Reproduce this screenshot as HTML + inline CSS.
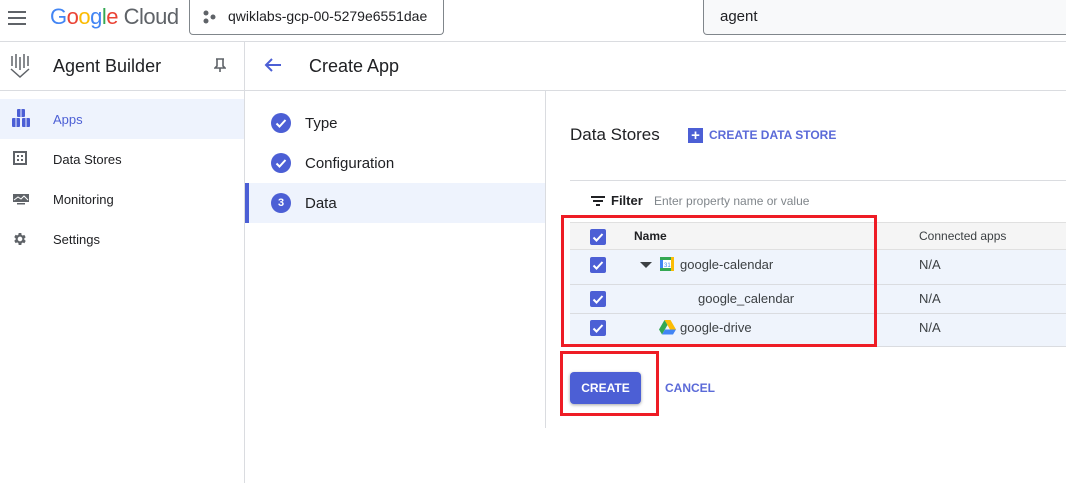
<!DOCTYPE html><html><head><style>
*{box-sizing:border-box;margin:0;padding:0}
body{width:1066px;height:483px;overflow:hidden;background:#fff;font-family:"Liberation Sans",Arial,sans-serif;color:#202124;position:relative}
.a{position:absolute}
.t{white-space:nowrap}
</style></head><body>
<div class="a" style="left:8px;top:11px;width:18px;height:2px;background:#5f6368;box-shadow:0 6px 0 #5f6368,0 12px 0 #5f6368"></div>
<div class="a t" style="left:50px;top:4px;font-size:22px;letter-spacing:-0.5px"><span style="color:#4285f4">G</span><span style="color:#ea4335">o</span><span style="color:#fbbc05">o</span><span style="color:#4285f4">g</span><span style="color:#34a853">l</span><span style="color:#ea4335">e</span> <span style="color:#5f6368">Cloud</span></div>
<div class="a" style="left:189px;top:0;width:255px;height:35px;border:1px solid #80868b;border-top:none;border-radius:0 0 4px 4px"></div>
<svg class="a" style="left:203px;top:10px" width="14" height="14"><circle cx="3" cy="3" r="2.5" fill="#5f6368"/><circle cx="3" cy="11" r="2.5" fill="#5f6368"/><circle cx="10" cy="7" r="2.5" fill="#5f6368"/></svg>
<div class="a t" style="left:228px;top:8px;font-size:14px">qwiklabs-gcp-00-5279e6551dae</div>
<div class="a" style="left:703px;top:0;width:370px;height:35px;border:1px solid #80868b;border-top:none;border-radius:0 0 4px 4px;background:#f8f9fa"></div>
<div class="a t" style="left:720px;top:8px;font-size:15px">agent</div>
<div class="a" style="left:0;top:41px;width:1066px;height:1px;background:#dadce0"></div>
<svg class="a" style="left:9px;top:53px" width="24" height="26"><g stroke="#5f6368" stroke-width="1.5"><line x1="3" y1="3" x2="3" y2="13"/><line x1="7" y1="1" x2="7" y2="15"/><line x1="11" y1="4" x2="11" y2="17"/><line x1="15" y1="1" x2="15" y2="15"/><line x1="19" y1="3" x2="19" y2="13"/></g><path d="M2 16 L11 24 L20 16" stroke="#5f6368" fill="none" stroke-width="1.5"/></svg>
<div class="a t" style="left:53px;top:56px;font-size:18px">Agent Builder</div>
<svg class="a" style="left:214px;top:58px" width="12" height="15"><path d="M2 1h8M3 1v7l-2 2h10l-2-2V1M6 10v4" stroke="#5f6368" fill="none" stroke-width="1.6"/></svg>
<div class="a" style="left:0;top:90px;width:1066px;height:1px;background:#dadce0"></div>
<div class="a" style="left:244px;top:42px;width:1px;height:441px;background:#dadce0"></div>
<div class="a" style="left:0;top:99px;width:244px;height:40px;background:#eef3fd"></div>
<svg class="a" style="left:11px;top:109px" width="20" height="19"><g fill="#4c5fd5"><rect x="6" y="0" width="8" height="8" rx="1"/><rect x="1" y="9" width="8" height="9" rx="1"/><rect x="11" y="9" width="8" height="9" rx="1"/></g><g stroke="#eef3fd" stroke-width="1"><line x1="10" y1="0" x2="10" y2="8"/><line x1="5" y1="9" x2="5" y2="18"/><line x1="15" y1="9" x2="15" y2="18"/></g></svg>
<div class="a t" style="left:53px;top:112px;font-size:13px;color:#4c5fd5">Apps</div>
<svg class="a" style="left:13px;top:151px" width="14" height="14"><rect x="1" y="1" width="12" height="12" fill="none" stroke="#5f6368" stroke-width="2"/><g fill="#5f6368"><rect x="4" y="4" width="2" height="2"/><rect x="8" y="4" width="2" height="2"/><rect x="4" y="8" width="2" height="2"/><rect x="8" y="8" width="2" height="2"/></g></svg>
<div class="a t" style="left:53px;top:152px;font-size:13px">Data Stores</div>
<svg class="a" style="left:12px;top:193px" width="18" height="12"><rect x="1" y="1" width="16" height="8" fill="#5f6368"/><path d="M2 7l4-3 3 2 3-3 4 4" stroke="#fff" fill="none"/><rect x="5" y="10" width="8" height="1.5" fill="#5f6368"/></svg>
<div class="a t" style="left:53px;top:192px;font-size:13px">Monitoring</div>
<svg class="a" style="left:12px;top:231px" width="16" height="16" viewBox="0 0 24 24"><path fill="#5f6368" d="M19.4 13a7.5 7.5 0 0 0 0-2l2.1-1.6-2-3.5-2.5 1a7 7 0 0 0-1.7-1L15 3h-4l-.4 2.7a7 7 0 0 0-1.7 1l-2.5-1-2 3.5L6.5 11a7.5 7.5 0 0 0 0 2l-2.1 1.6 2 3.5 2.5-1a7 7 0 0 0 1.7 1L11 21h4l.4-2.7a7 7 0 0 0 1.7-1l2.5 1 2-3.5zM13 15.5A3.5 3.5 0 1 1 13 8.5a3.5 3.5 0 0 1 0 7z" transform="translate(-1 0)"/></svg>
<div class="a t" style="left:53px;top:232px;font-size:13px">Settings</div>
<svg class="a" style="left:263px;top:57px" width="20" height="16"><path d="M18 8H3M9 2L3 8l6 6" stroke="#4c5fd5" stroke-width="2" fill="none"/></svg>
<div class="a t" style="left:309px;top:56px;font-size:18px">Create App</div>
<div class="a" style="left:545px;top:91px;width:1px;height:337px;background:#dadce0"></div>
<svg class="a" style="left:271px;top:113px" width="20" height="20"><circle cx="10" cy="10" r="10" fill="#4c5fd5"/><path d="M5.5 10.5l3 3 6-6.5" stroke="#fff" stroke-width="2" fill="none"/></svg>
<div class="a t" style="left:305px;top:115px;font-size:15px">Type</div>
<svg class="a" style="left:271px;top:153px" width="20" height="20"><circle cx="10" cy="10" r="10" fill="#4c5fd5"/><path d="M5.5 10.5l3 3 6-6.5" stroke="#fff" stroke-width="2" fill="none"/></svg>
<div class="a t" style="left:305px;top:155px;font-size:15px">Configuration</div>
<div class="a" style="left:245px;top:183px;width:300px;height:40px;background:#eef3fd"></div>
<div class="a" style="left:245px;top:183px;width:4px;height:40px;background:#4c5fd5"></div>
<div class="a" style="left:271px;top:193px;width:20px;height:20px;border-radius:50%;background:#4c5fd5;color:#fff;font-size:11px;font-weight:bold;text-align:center;line-height:20px">3</div>
<div class="a t" style="left:305px;top:195px;font-size:15px">Data</div>
<div class="a t" style="left:570px;top:125px;font-size:17px">Data Stores</div>
<div class="a" style="left:688px;top:128px;width:15px;height:15px;background:#4c5fd5;color:#fff;font-size:15px;line-height:15px;text-align:center;font-weight:bold">+</div>
<div class="a t" style="left:709px;top:128px;font-size:12px;font-weight:bold;color:#5b6ad8">CREATE DATA STORE</div>
<div class="a" style="left:570px;top:180px;width:496px;height:1px;background:#dadce0"></div>
<div class="a" style="left:591px;top:196px;width:14px;height:2px;background:#202124"></div>
<div class="a" style="left:593px;top:200px;width:10px;height:2px;background:#202124"></div>
<div class="a" style="left:596px;top:204px;width:4px;height:2px;background:#202124"></div>
<div class="a t" style="left:611px;top:193px;font-size:13px;font-weight:bold">Filter</div>
<div class="a t" style="left:654px;top:194px;font-size:12px;color:#80868b">Enter property name or value</div>
<div class="a" style="left:570px;top:222px;width:496px;height:28px;background:#f5f5f5;border-top:1px solid #e0e0e0;border-bottom:1px solid #e0e0e0"></div>
<div class="a" style="left:570px;top:250px;width:496px;height:96px;background:#eff4fc"></div>
<div class="a" style="left:570px;top:284px;width:496px;height:1px;background:#dadce0"></div>
<div class="a" style="left:570px;top:313px;width:496px;height:1px;background:#dadce0"></div>
<div class="a" style="left:570px;top:346px;width:496px;height:1px;background:#dadce0"></div>
<div class="a t" style="left:634px;top:229px;font-size:12px;font-weight:bold">Name</div>
<div class="a t" style="left:919px;top:229px;font-size:12px;color:#3c4043">Connected apps</div>
<svg width="0" height="0" style="position:absolute"><defs><g id="cb"><rect width="16" height="16" rx="2" fill="#4c5fd5"/><path d="M3.5 8.5l3 3 6-6.5" stroke="#fff" stroke-width="2" fill="none"/></g></defs></svg>
<svg class="a" style="left:590px;top:229px" width="16" height="16"><use href="#cb"/></svg>
<svg class="a" style="left:590px;top:257px" width="16" height="16"><use href="#cb"/></svg>
<svg class="a" style="left:590px;top:291px" width="16" height="16"><use href="#cb"/></svg>
<svg class="a" style="left:590px;top:320px" width="16" height="16"><use href="#cb"/></svg>
<svg class="a" style="left:640px;top:262px" width="12" height="7"><path d="M0 0h12L6 6z" fill="#3c4043"/></svg>
<svg class="a" style="left:660px;top:257px" width="14" height="14"><rect x="0" y="0" width="14" height="14" rx="1" fill="#4285f4"/><rect x="0" y="0" width="14" height="3" fill="#34a853"/><rect x="11" y="0" width="3" height="14" fill="#fbbc05"/><rect x="0" y="11" width="11" height="3" fill="#34a853"/><rect x="3" y="3" width="8" height="8" fill="#fff"/><text x="4" y="10" font-size="6" fill="#4285f4">31</text></svg>
<div class="a t" style="left:680px;top:257px;font-size:13px;color:#3c4043">google-calendar</div>
<div class="a t" style="left:698px;top:291px;font-size:13px;color:#3c4043">google_calendar</div>
<svg class="a" style="left:659px;top:320px" width="17" height="15"><path d="M5.5 0h6l5.5 9.5h-6z" fill="#fbbc05"/><path d="M5.5 0L0 9.5l3 5 5.5-9.5z" fill="#34a853"/><path d="M3 14.5h11l3-5H6z" fill="#4285f4"/></svg>
<div class="a t" style="left:680px;top:320px;font-size:13px;color:#3c4043">google-drive</div>
<div class="a t" style="left:919px;top:257px;font-size:13px;color:#3c4043">N/A</div>
<div class="a t" style="left:919px;top:291px;font-size:13px;color:#3c4043">N/A</div>
<div class="a t" style="left:919px;top:320px;font-size:13px;color:#3c4043">N/A</div>
<div class="a" style="left:570px;top:372px;width:71px;height:32px;background:#4c5fd5;border-radius:4px;box-shadow:0 1px 3px rgba(0,0,0,.35);color:#fff;font-size:12px;font-weight:bold;text-align:center;line-height:32px">CREATE</div>
<div class="a t" style="left:665px;top:381px;font-size:12px;font-weight:bold;color:#5b6ad8">CANCEL</div>
<div class="a" style="left:561px;top:215px;width:316px;height:132px;border:3px solid #ee1c25"></div>
<div class="a" style="left:560px;top:351px;width:99px;height:65px;border:3px solid #ee1c25"></div>
</body></html>
